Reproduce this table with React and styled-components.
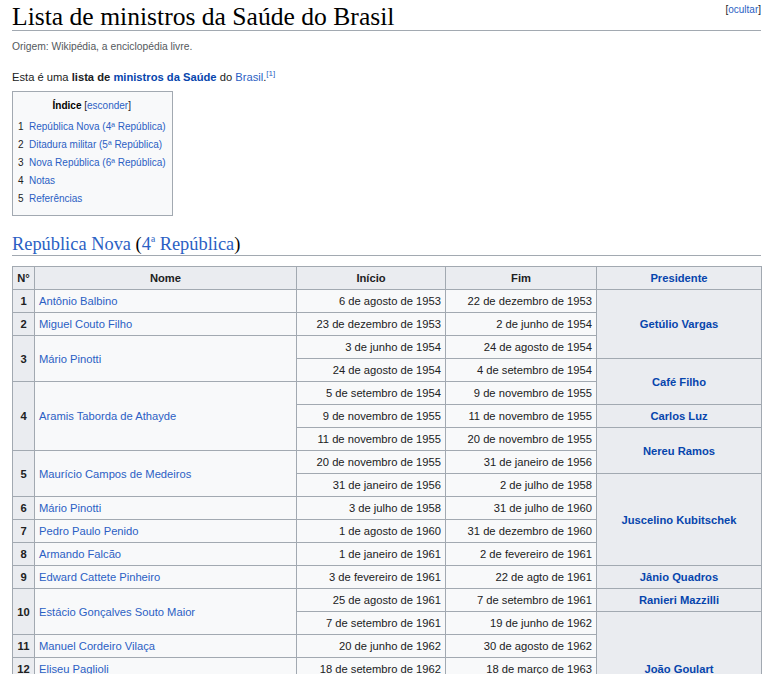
import styled, { createGlobalStyle } from "styled-components";

const GlobalStyle = createGlobalStyle`
  body {
    margin: 0;
    background: #fff;
    color: #202122;
    font-family: "Liberation Sans", Arial, sans-serif;
  }
`;

const rows = [
  { num: 1, name: "Antônio Balbino", span: 1, start: "6 de agosto de 1953", end: "22 de dezembro de 1953", pres: "Getúlio Vargas", presSpan: 3 },
  { num: 2, name: "Miguel Couto Filho", span: 1, start: "23 de dezembro de 1953", end: "2 de junho de 1954" },
  { num: 3, name: "Mário Pinotti", span: 2, start: "3 de junho de 1954", end: "24 de agosto de 1954" },
  { start: "24 de agosto de 1954", end: "4 de setembro de 1954", pres: "Café Filho", presSpan: 2 },
  { num: 4, name: "Aramis Taborda de Athayde", span: 3, start: "5 de setembro de 1954", end: "9 de novembro de 1955" },
  { start: "9 de novembro de 1955", end: "11 de novembro de 1955", pres: "Carlos Luz", presSpan: 1 },
  { start: "11 de novembro de 1955", end: "20 de novembro de 1955", pres: "Nereu Ramos", presSpan: 2 },
  { num: 5, name: "Maurício Campos de Medeiros", span: 2, start: "20 de novembro de 1955", end: "31 de janeiro de 1956" },
  { start: "31 de janeiro de 1956", end: "2 de julho de 1958", pres: "Juscelino Kubitschek", presSpan: 4 },
  { num: 6, name: "Mário Pinotti", span: 1, start: "3 de julho de 1958", end: "31 de julho de 1960" },
  { num: 7, name: "Pedro Paulo Penido", span: 1, start: "1 de agosto de 1960", end: "31 de dezembro de 1960" },
  { num: 8, name: "Armando Falcão", span: 1, start: "1 de janeiro de 1961", end: "2 de fevereiro de 1961" },
  { num: 9, name: "Edward Cattete Pinheiro", span: 1, start: "3 de fevereiro de 1961", end: "22 de agto de 1961", pres: "Jânio Quadros", presSpan: 1 },
  { num: 10, name: "Estácio Gonçalves Souto Maior", span: 2, start: "25 de agosto de 1961", end: "7 de setembro de 1961", pres: "Ranieri Mazzilli", presSpan: 1 },
  { start: "7 de setembro de 1961", end: "19 de junho de 1962", pres: "João Goulart", presSpan: 5 },
  { num: 11, name: "Manuel Cordeiro Vilaça", span: 1, start: "20 de junho de 1962", end: "30 de agosto de 1962" },
  { num: 12, name: "Eliseu Paglioli", span: 1, start: "18 de setembro de 1962", end: "18 de março de 1963" },
  { num: 13, name: "Paulo Pinheiro Chagas", span: 1, start: "18 de março de 1963", end: "21 de junho de 1963" },
  { num: 14, name: "Wilson Fadul", span: 1, start: "21 de junho de 1963", end: "4 de abril de 1964" },
];

const tocItems = [
  "República Nova (4ª República)",
  "Ditadura militar (5ª República)",
  "Nova República (6ª República)",
  "Notas",
  "Referências",
];

export default function App() {
  return (
    <>
      <GlobalStyle />
      <Page>
        <Header>
          <Title>Lista de ministros da Saúde do Brasil</Title>
          <Toggle>[<A href="#">ocultar</A>]</Toggle>
        </Header>
        <Origin>Origem: Wikipédia, a enciclopédia livre.</Origin>
        <Lead>
          Esta é uma <b>lista de <A $bold href="#">ministros da Saúde</A></b> do <A href="#">Brasil</A>.
          <Ref><A href="#">[1]</A></Ref>
        </Lead>
        <Toc>
          <TocTitle>
            <b>Índice</b> <Toggle as="span">[<A href="#">esconder</A>]</Toggle>
          </TocTitle>
          {tocItems.map((item, i) => (
            <TocItem key={item}>
              <TocNum>{i + 1}</TocNum>
              <A href="#">{item}</A>
            </TocItem>
          ))}
        </Toc>
        <Section>
          <A href="#">República Nova</A> (<A href="#">4<Ord>ª</Ord> República</A>)
        </Section>
        <Table>
          <colgroup>
            <col style={{ width: 22 }} />
            <col style={{ width: 262 }} />
            <col style={{ width: 149 }} />
            <col style={{ width: 151 }} />
            <col style={{ width: 165 }} />
          </colgroup>
          <thead>
            <tr>
              <Head>N°</Head>
              <Head>Nome</Head>
              <Head>Início</Head>
              <Head>Fim</Head>
              <Head><A $bold href="#">Presidente</A></Head>
            </tr>
          </thead>
          <tbody>
            {rows.map((r, i) => (
              <tr key={i}>
                {r.num && <NumCell rowSpan={r.span}>{r.num}</NumCell>}
                {r.num && (
                  <NameCell rowSpan={r.span}>
                    <A href="#">{r.name}</A>
                  </NameCell>
                )}
                <DateCell>{r.start}</DateCell>
                <DateCell>{r.end}</DateCell>
                {r.pres && (
                  <PresCell rowSpan={r.presSpan}>
                    <A $bold href="#">{r.pres}</A>
                  </PresCell>
                )}
              </tr>
            ))}
          </tbody>
        </Table>
      </Page>
    </>
  );
}

const Page = styled.div`
  padding: 0 7px 0 12px;
  font-size: 11.2px;
`;

const A = styled.a`
  color: ${(p) => (p.$bold ? "#0645ad" : "#2b5fc4")};
  font-weight: ${(p) => (p.$bold ? "bold" : "inherit")};
  text-decoration: none;
`;

const Header = styled.div`
  display: flex;
  align-items: flex-start;
  border-bottom: 1px solid #a2a9b1;
`;

const Title = styled.h1`
  flex: 1;
  margin: 0;
  padding-top: 3px;
  font-family: "Liberation Serif", "Times New Roman", serif;
  font-weight: normal;
  font-size: 25.6px;
  line-height: 27px;
  color: #000;
`;

const Toggle = styled.div`
  font-size: 10px;
  line-height: 14px;
  padding-top: 3px;
  color: #202122;
  font-weight: normal;
`;

const Origin = styled.div`
  margin-top: 8px;
  font-size: 10.3px;
  line-height: 16px;
  color: #54595d;
`;

const Lead = styled.p`
  margin: 13px 0 0;
  line-height: 18px;
`;

const Ref = styled.sup`
  font-size: 8px;
  line-height: 0;
`;

const Toc = styled.div`
  display: inline-block;
  margin-top: 5px;
  padding: 5px 6px 7px 5px;
  background: #f8f9fa;
  border: 1px solid #a2a9b1;
  font-size: 10px;
`;

const TocTitle = styled.div`
  text-align: center;
  line-height: 18px;
  margin-bottom: 3px;
  color: #000;

  ${Toggle} {
    display: inline;
    padding: 0;
  }
`;

const TocItem = styled.div`
  display: flex;
  line-height: 18px;
  white-space: nowrap;
`;

const TocNum = styled.span`
  width: 11px;
  color: #202122;
`;

const Section = styled.h2`
  margin: 18px 0 0;
  font-family: "Liberation Serif", "Times New Roman", serif;
  font-weight: normal;
  font-size: 18.4px;
  line-height: 21px;
  color: #000;
  border-bottom: 1px solid #a2a9b1;
`;

const Ord = styled.span`
  display: inline-block;
  font-size: 15px;
  line-height: 0;
  transform: translateY(-3px);
`;

const Table = styled.table`
  margin-top: 10px;
  width: 749px;
  table-layout: fixed;
  border-collapse: collapse;
  background: #f8f9fa;
  border: 1px solid #a2a9b1;
  font-size: 11.2px;
`;

const Cell = styled.td`
  border: 1px solid #a2a9b1;
  padding: 0 4px;
  line-height: 22px;
  white-space: nowrap;
  overflow: hidden;
`;

const Head = styled(Cell).attrs({ as: "th" })`
  background: #eaecf0;
  font-weight: bold;
  text-align: center;
  color: #202122;
`;

const NumCell = styled(Cell).attrs({ as: "th" })`
  background: #eaecf0;
  font-weight: bold;
  text-align: center;
  padding: 0;
`;

const NameCell = styled(Cell)`
  text-align: left;
`;

const DateCell = styled(Cell)`
  text-align: right;
`;

const PresCell = styled(Cell)`
  background: #eaecf0;
  text-align: center;
`;
